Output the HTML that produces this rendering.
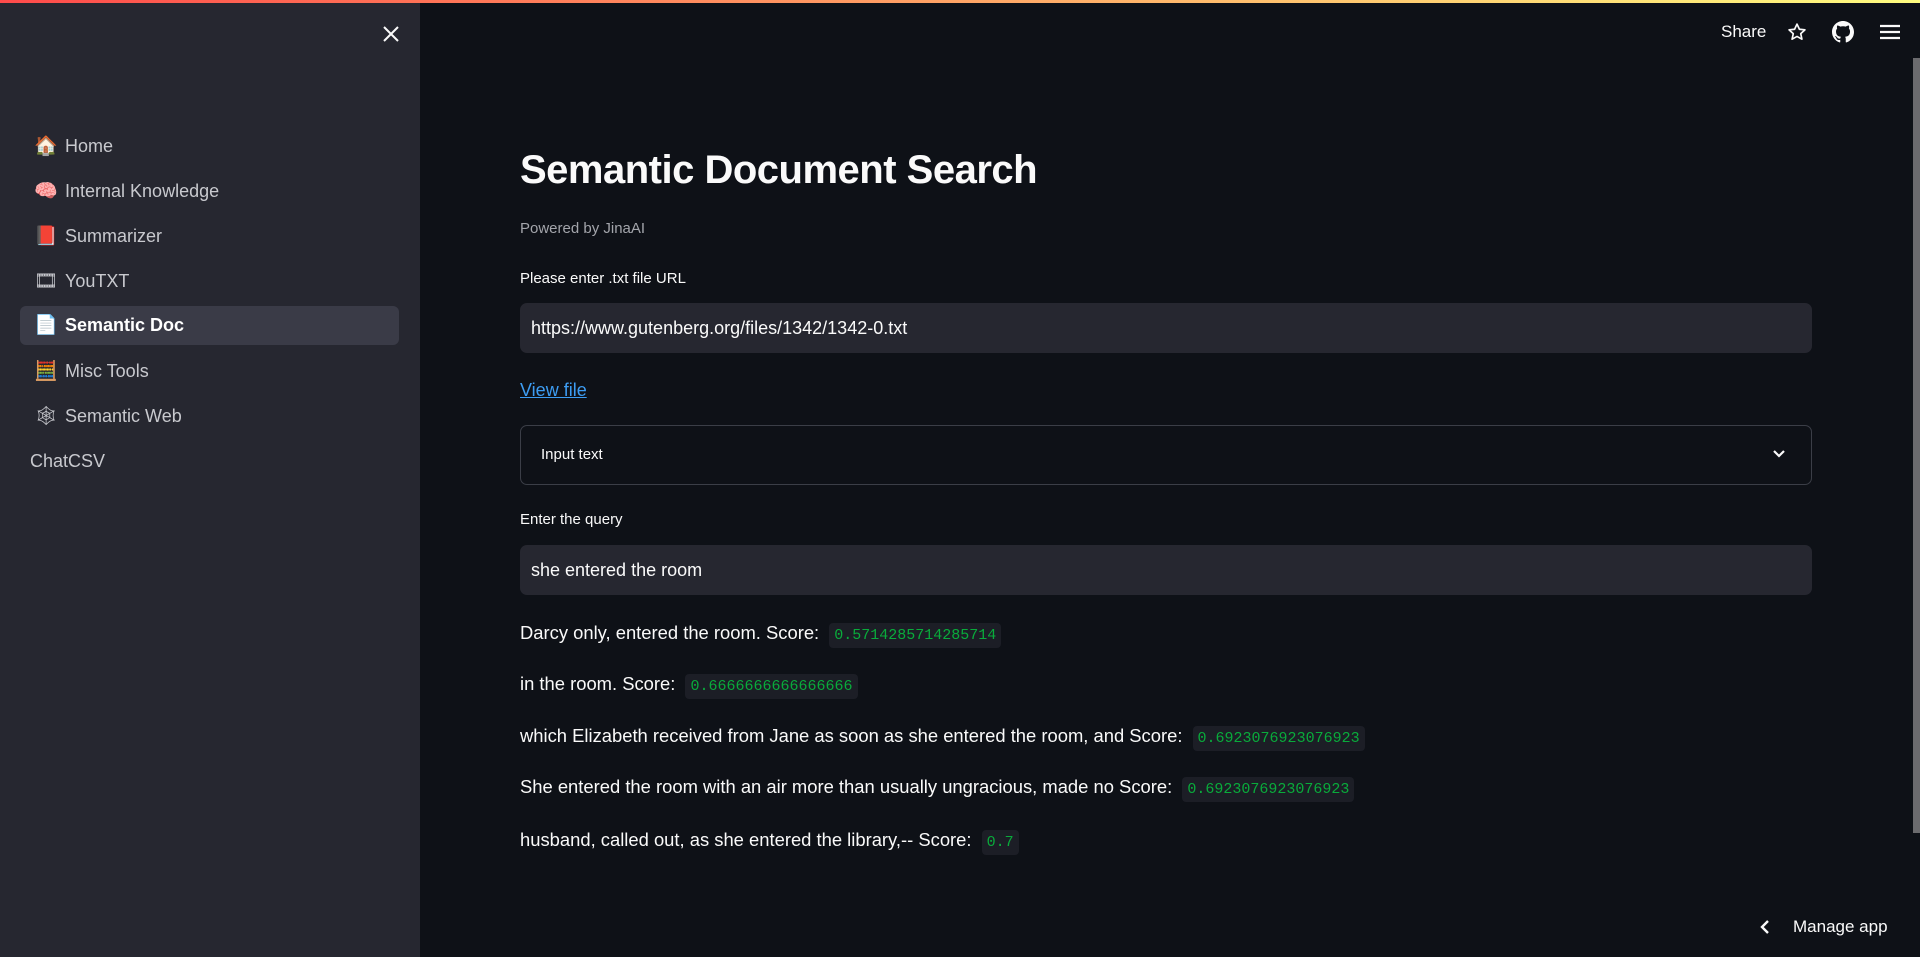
<!DOCTYPE html>
<html><head><meta charset="utf-8"><style>
*{margin:0;padding:0;box-sizing:border-box}
body{width:1920px;height:957px;overflow:hidden;background:#0e1117;font-family:"Liberation Sans",sans-serif;color:#fafafa;position:relative}
.a{position:absolute;white-space:nowrap}
.topbar{position:absolute;left:0;top:0;width:1920px;height:3px;background:linear-gradient(90deg,#ff4b4b,#fffd80)}
.side{position:absolute;left:0;top:3px;width:420px;height:954px;background:#262730}
.nav{position:absolute;left:20px;width:379px;height:39px;border-radius:6px;font-size:18px;color:#c8c9ce;line-height:39px}
.nav .ic{position:absolute;left:14px;top:0;width:24px;text-align:center;font-size:19px}
.nav .t{position:absolute;left:45px}
.nav.act{background:#3a3b47;color:#fff;font-weight:bold}
.lbl{font-size:16px;color:#fafafa}
.inp{position:absolute;left:520px;width:1292px;height:50px;background:#262730;border-radius:7px;font-size:18px;line-height:50px;padding-left:11px;color:#fafafa}
.res{position:absolute;left:520px;font-size:18.4px;line-height:26px;white-space:nowrap}
code{font-family:"Liberation Mono",monospace;font-size:15px;color:#09ab3b;background:#1c1e26;border-radius:4px;padding:4px 5px;margin-left:5px}
</style></head><body>
<div class="topbar"></div>
<div class="side">
<svg class="a" style="left:382px;top:22px" width="18" height="18" viewBox="0 0 18 18"><path d="M2 2L16 16M16 2L2 16" stroke="#fafafa" stroke-width="2"/></svg>
<div class="nav" style="top:124px"><span class="ic">🏠</span><span class="t">Home</span></div>
<div class="nav" style="top:169px"><span class="ic">🧠</span><span class="t">Internal Knowledge</span></div>
<div class="nav" style="top:214px"><span class="ic">📕</span><span class="t">Summarizer</span></div>
<div class="nav" style="top:259px"><span class="ic">🎞</span><span class="t">YouTXT</span></div>
<div class="nav act" style="top:303px"><span class="ic">📄</span><span class="t">Semantic Doc</span></div>
<div class="nav" style="top:349px"><span class="ic">🧮</span><span class="t">Misc Tools</span></div>
<div class="nav" style="top:394px"><span class="ic">🕸</span><span class="t">Semantic Web</span></div>
<div class="a" style="left:30px;top:448px;font-size:18px;color:#c8c9ce">ChatCSV</div>
</div>

<div class="a" style="left:1721px;top:22px;font-size:17px">Share</div>
<svg class="a" style="left:1787px;top:22px" width="20" height="20" viewBox="0 0 24 24"><path d="M12 2.5l2.9 6.2 6.6.7-5 4.6 1.4 6.6L12 17.3l-5.9 3.3 1.4-6.6-5-4.6 6.6-.7z" fill="none" stroke="#fafafa" stroke-width="2" stroke-linejoin="round"/></svg>
<svg class="a" style="left:1832px;top:21px" width="22" height="22" viewBox="0 0 16 16"><path fill="#fafafa" d="M8 0C3.58 0 0 3.580 0 8c0 3.540 2.290 6.530 5.470 7.590.4.070.550-.170.550-.380 0-.190-.010-.820-.010-1.490-2.010.370-2.530-.490-2.690-.940-.090-.230-.480-.940-.820-1.130-.280-.150-.680-.520-.010-.530.630-.010 1.080.580 1.230.820.720 1.210 1.870.870 2.330.660.070-.520.280-.870.510-1.070-1.780-.2-3.640-.890-3.640-3.950 0-.870.310-1.590.820-2.150-.080-.2-.360-1.020.080-2.120 0 0 .670-.210 2.2.820.640-.180 1.320-.270 2-.270.680 0 1.360.090 2 .270 1.530-1.040 2.2-.820 2.2-.820.440 1.1.160 1.920.080 2.120.510.560.820 1.270.820 2.150 0 3.070-1.870 3.750-3.650 3.950.290.250.540.730.540 1.480 0 1.070-.010 1.930-.010 2.2 0 .210.150.460.550.380A8.013 8.013 0 0016 8c0-4.420-3.580-8-8-8z"/></svg>
<svg class="a" style="left:1880px;top:24px" width="20" height="16" viewBox="0 0 20 16"><path d="M0 2h20M0 8h20M0 14h20" stroke="#fafafa" stroke-width="2.2"/></svg>
<div class="a" style="left:1913px;top:58px;width:7px;height:775px;background:#6b6b6e"></div>

<div class="a" style="left:520px;top:148px;font-size:40px;font-weight:bold;letter-spacing:-0.5px">Semantic Document Search</div>
<div class="a" style="left:520px;top:220px;font-size:15px;color:#a3a5ab">Powered by JinaAI</div>
<div class="a lbl" style="left:520px;top:270px;font-size:15px">Please enter .txt file URL</div>
<div class="inp" style="top:303px">https://www.gutenberg.org/files/1342/1342-0.txt</div>
<div class="a" style="left:520px;top:380px;font-size:18px;color:#3d9df3;text-decoration:underline">View file</div>
<div class="a" style="left:520px;top:425px;width:1292px;height:60px;border:1px solid #3b3e47;border-radius:7px"></div>
<div class="a" style="left:541px;top:446px;font-size:15px">Input text</div>
<svg class="a" style="left:1772px;top:449px" width="14" height="10" viewBox="0 0 14 10"><path d="M2 2l5 5 5-5" fill="none" stroke="#fafafa" stroke-width="2.2"/></svg>
<div class="a lbl" style="left:520px;top:511px;font-size:15px">Enter the query</div>
<div class="inp" style="top:545px">she entered the room</div>

<div class="res" style="top:620px">Darcy only, entered the room. Score: <code>0.5714285714285714</code></div>
<div class="res" style="top:671px">in the room. Score: <code>0.6666666666666666</code></div>
<div class="res" style="top:723px">which Elizabeth received from Jane as soon as she entered the room, and Score: <code>0.6923076923076923</code></div>
<div class="res" style="top:774px">She entered the room with an air more than usually ungracious, made no Score: <code>0.6923076923076923</code></div>
<div class="res" style="top:827px">husband, called out, as she entered the library,-- Score: <code>0.7</code></div>

<svg class="a" style="left:1759px;top:919px" width="12" height="16" viewBox="0 0 12 16"><path d="M9 2L3 8l6 6" fill="none" stroke="#fafafa" stroke-width="2.4"/></svg>
<div class="a" style="left:1793px;top:917px;font-size:17px">Manage app</div>
</body></html>
